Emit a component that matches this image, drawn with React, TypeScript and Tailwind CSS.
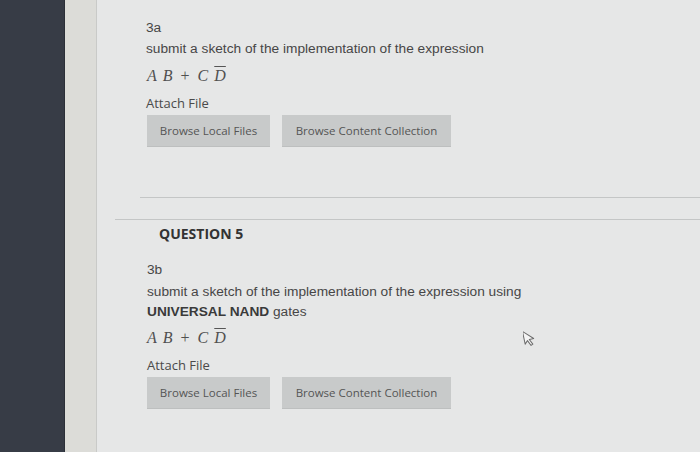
const sans = { fontFamily: '"Liberation Sans", Arial, sans-serif' };
const open = { fontFamily: '"Open Sans", "Noto Sans", sans-serif' };
const serif = { fontFamily: '"Liberation Serif", "Times New Roman", serif' };

function Formula({ className }: { className: string }) {
  return (
    <div className={`flex items-baseline italic text-[16px] leading-[24px] text-[#505050] ${className}`} style={serif}>
      <span>A</span>
      <span className="ml-[6px]">B</span>
      <span className="ml-[8px] not-italic">+</span>
      <span className="ml-[8px]">C</span>
      <span className="ml-[6px] overline decoration-[#555]">D</span>
    </div>
  );
}

function Buttons({ className }: { className: string }) {
  return (
    <div className={`flex gap-[12px] ${className}`} style={open}>
      <button className="w-[123px] h-[31px] bg-[#c8caca] text-[11.5px] text-[#555] shadow-[0_1px_0_#bdbfbf]">
        Browse Local Files
      </button>
      <button className="w-[169px] h-[31px] bg-[#c8caca] text-[11.5px] text-[#555] shadow-[0_1px_0_#bdbfbf]">
        Browse Content Collection
      </button>
    </div>
  );
}

export default function App() {
  return (
    <div className="w-[700px] h-[452px] flex overflow-hidden relative">
      <div className="w-[65px] bg-[#373c46] border-r border-[#2c3038]" />
      <div className="w-[32px] bg-[#dcdcd8] border-r border-[#c9cac8]" />
      <div className="flex-1 bg-[#e6e7e7] pt-[18px]">
        <div className="pl-[49px] text-[13.7px] text-[#464646]" style={sans}>
          <p className="leading-[20px]">3a</p>
          <p className="leading-[20px] mt-[1px]">submit a sketch of the implementation of the expression</p>
        </div>
        <Formula className="pl-[50px] mt-[5px]" />
        <p className="pl-[49px] mt-[5px] text-[13px] leading-[20px] text-[#4a4a4a]" style={open}>Attach File</p>
        <Buttons className="pl-[50px] mt-[2px]" />
        <div className="ml-[43px] mt-[51px] border-t border-[#c4c6c6]" />
        <div className="ml-[18px] mt-[21px] border-t border-[#c4c6c6]" />
        <p className="pl-[62px] mt-[4px] text-[14px] font-bold leading-[20px] text-[#333]" style={open}>QUESTION 5</p>
        <div className="pl-[50px] mt-[16px] text-[13.7px] text-[#464646]" style={sans}>
          <p className="leading-[20px]">3b</p>
          <p className="leading-[20px] mt-[2px]">submit a sketch of the implementation of the expression using</p>
          <p className="leading-[20px]">
            <b className="text-[#3a3a3a]">UNIVERSAL NAND</b> gates
          </p>
        </div>
        <Formula className="pl-[50px] mt-[4px]" />
        <p className="pl-[50px] mt-[5px] text-[13px] leading-[20px] text-[#4a4a4a]" style={open}>Attach File</p>
        <Buttons className="pl-[50px] mt-[2px]" />
      </div>
      <svg className="absolute left-[523px] top-[329px]" width="14" height="18" viewBox="0 0 14 18">
        <path d="M1 1 L1 14 L4 11 L6.5 16.5 L8.5 15.6 L6 10.3 L10.5 10.3 Z" fill="#f4f4f4" stroke="#6a6a6a" strokeWidth="1" strokeLinejoin="round" transform="rotate(-12 7 9)" />
      </svg>
    </div>
  );
}
